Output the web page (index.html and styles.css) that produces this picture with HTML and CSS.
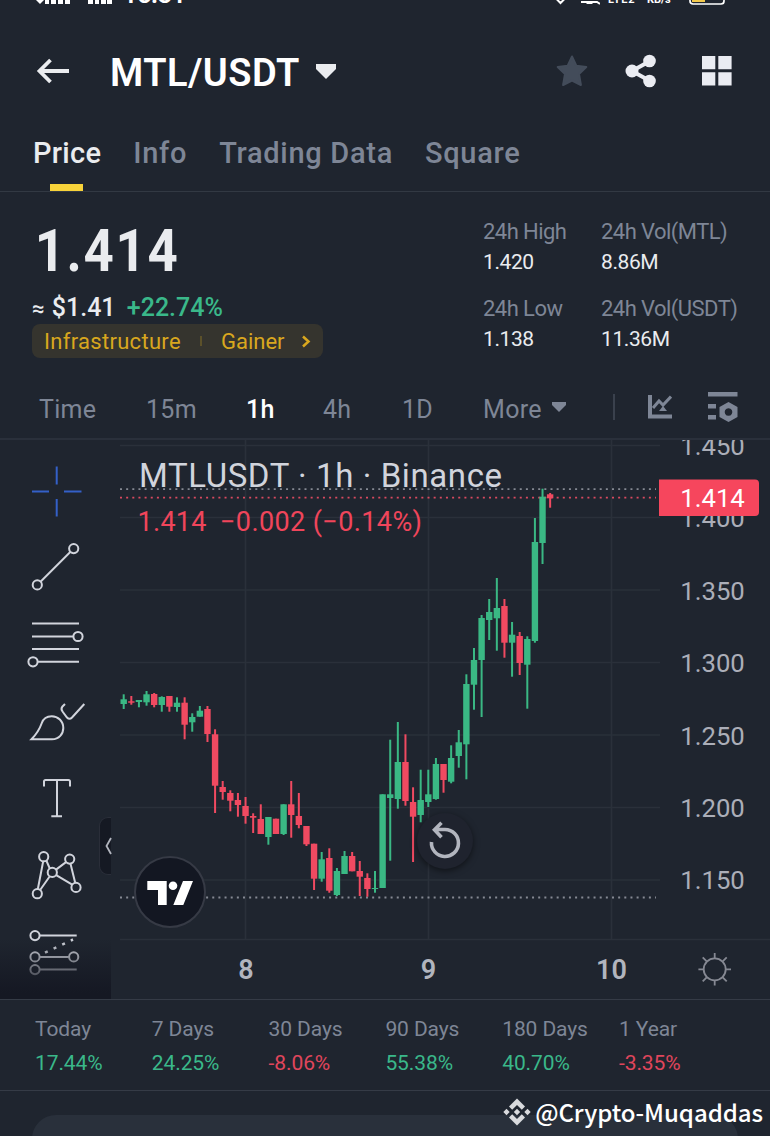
FILE: index.html
```html
<!DOCTYPE html>
<html lang="en">
<head>
<meta charset="utf-8">
<meta name="viewport" content="width=device-width, initial-scale=1">
<title>MTL/USDT</title>
<link rel="stylesheet" href="styles.css">
</head>
<body>
    <div class="status-bar">
      <svg width="76" height="6" viewBox="36 0 76 6" fill="#fff">
        <path d="M36 0h8l-4 4zM45 0h4v4h-4zM51 0h5v4h-5zM58 0h5v4h-5zM65 0h5v4h-5zM88 0h5v4h-5zM95 0h4v4h-4zM101 0h5v4h-5zM107 0h5v4h-5z"/>
      </svg>
      <span class="clock">16:51</span>
      <svg class="alerts" width="44" height="6" viewBox="556 0 44 6" fill="none" stroke="#fff" stroke-width="2">
        <path d="M556.5-1l4 4 4-4M581 2h16l3 2M586.500 3h6"/>
      </svg>
      <span class="net">LTE2</span>
      <span class="net speed">KB/s</span>
      <svg class="battery" width="37" height="6" viewBox="689 0 37 6">
        <path d="M692 0h13v2h-13z" fill="#f2c94c"/>
        <path d="M690-4v5q0 3 3 3h28q3 0 3-3v-5" fill="none" stroke="#fff" stroke-width="1.700"/>
      </svg>
    </div>

    <div class="header">
      <svg class="back" width="34" height="28" viewBox="0 0 34 28">
        <path d="M33 14H3M14.500 3L3.500 14l11 11" fill="none" stroke="#eaecef" stroke-width="3.800"/>
      </svg>
      <h1>MTL/USDT</h1>
      <svg class="caret" width="20" height="16" viewBox="0 0 20 16"><path d="M0 0h20v5L10 15 0 5z" fill="#eaecef"/></svg>
      <div class="actions">
        <svg width="32" height="34" viewBox="0 0 32 34">
          <path d="M16 2.500l4.300 9.200 10 1.300-7.300 7 1.900 11L16 26.500 7.100 31 9 20 1.700 13l10-1.300z" fill="#434c5a" stroke="#434c5a" stroke-width="2" stroke-linejoin="round"/>
        </svg>
        <svg width="32" height="34" viewBox="0 0 32 34" fill="#eaecf2">
          <path d="M25 7L7 17l18 10" fill="none" stroke="#eaecf2" stroke-width="4"/>
          <circle cx="24.500" cy="7" r="6.300"/><circle cx="7" cy="17" r="6.500"/><circle cx="24.500" cy="27" r="6.300"/>
        </svg>
        <svg width="30" height="30" viewBox="0 0 30 30">
          <path d="M0 0h13.300v13.300H0zM16.300 0h13.300v13.300H16.300zM0 16.300h13.300v13.300H0zM16.300 16.300h13.300v13.300H16.300z" fill="#eaecf2"/>
        </svg>
      </div>
    </div>

    <div class="tabs">
      <a class="active">Price</a>
      <a>Info</a>
      <a>Trading Data</a>
      <a>Square</a>
    </div>

    <div class="summary">
      <div class="price-box">
        <div class="price">1.414</div>
        <div class="change"><span class="approx">≈</span> <span class="usd">$1.41</span> <span class="up">+22.74%</span></div>
        <div class="tags">
          <span class="tag">Infrastructure</span>
          <i></i>
          <span>Gainer</span>
          <svg width="9" height="13" viewBox="0 0 9 13"><path d="M1 1.500l5.500 5-5.500 5" fill="none" stroke="#d9a71e" stroke-width="2.500"/></svg>
        </div>
      </div>
      <div class="day-stats">
        <div><label>24h High</label><b>1.420</b></div>
        <div><label>24h Vol(MTL)</label><b>8.86M</b></div>
        <div><label>24h Low</label><b>1.138</b></div>
        <div><label>24h Vol(USDT)</label><b>11.36M</b></div>
      </div>
    </div>

    <div class="intervals">
      <span>Time</span>
      <span>15m</span>
      <span class="active">1h</span>
      <span>4h</span>
      <span>1D</span>
      <span class="more">More <svg width="14" height="10" viewBox="0 0 14 10"><path d="M0 0h14v3L7 10 0 3z" fill="#7e8696"/></svg></span>
      <i></i>
      <svg width="24" height="24" viewBox="0 0 24 24" fill="none" stroke="#7e8696">
        <path d="M2 0v21.500h22" stroke-width="4"/>
        <path d="M5 13l6-7 4 4 8-8.500" stroke-width="3"/>
        <path d="M15 11l4 5h-8z" fill="#7e8696" stroke="none"/>
      </svg>
      <svg width="30" height="30" viewBox="0 0 30 30" fill="#7e8696">
        <path d="M0 0h29.500v4.500H0zM0 12h8v4.500H0zM0 23h8v4.500H0z"/>
        <path d="M20.500 10l9 5v10l-9 5-9-5V15zM20.500 16.200a3.800 3.800 0 1 0 .01 0z" fill-rule="evenodd"/>
      </svg>
    </div>

    <div class="chart-area">
      <div class="toolbar">
        <svg class="cross" viewBox="0 0 64 76.800"><path d="M32.700 13.400v18M32.700 46v17.400M8 38.400h17M40 38.400h17.500"/></svg>
        <svg viewBox="0 0 64 76.800"><path d="M16.500 52.700l30-30"/><circle cx="49.700" cy="19.600" r="4.600"/><circle cx="13.300" cy="55.900" r="4.600"/></svg>
        <svg viewBox="0 0 64 76.800"><path d="M8 17.500h47M8 30.500h41.500M8 43.100h47M13.500 55.800H55"/><circle cx="54" cy="30.500" r="4.600"/><circle cx="9" cy="55.800" r="4.600"/></svg>
        <svg viewBox="0 0 64 76.800"><path d="M7.500 56.300H28c7 0 11.300-5.300 11.300-11.300 0-7-5.300-11.700-11.600-11.700-5.700 0-8.700 3.200-10 7-2.200 6.200-5 10.700-10.200 16zM41 21l-2.500 2.500q-2 2.500 0 5l4.500 6q2.500 2.500 5 0L60.300 21"/></svg>
        <svg viewBox="0 0 64 76.800"><path d="M20 26.500v-5q0-1.600 1.600-1.600h22.800q1.600 0 1.600 1.600v5M33 19.900v36.300M27.300 56.200H38"/></svg>
        <svg viewBox="0 0 64 76.800"><path d="M19.200 24.200l-5.400 28M22.300 23.500l3.500 8M32 32.600l10-7.500M25.800 39.300l-9.500 13.500M32.200 38.100l16 9.600M46.500 26.700l4.700 19"/><circle cx="19.700" cy="19.700" r="4.600"/><circle cx="45.700" cy="22.100" r="4.600"/><circle cx="28.300" cy="35.400" r="4.600"/><circle cx="13.300" cy="56.700" r="4.600"/><circle cx="52" cy="50.400" r="4.600"/></svg>
        <svg viewBox="0 0 64 76.800"><path d="M15.700 22.600h37M15.700 43.900H45M15.700 56.600h37"/><path d="M21 39.600l28-13.100" stroke-dasharray="3 6.500" stroke-width="2.500"/><circle cx="11" cy="22.600" r="4.600"/><circle cx="11" cy="43.900" r="4.600"/><circle cx="49.700" cy="43.900" r="4.600"/><circle cx="11" cy="56.600" r="4.600"/></svg>
        <div class="fade"></div>
        <div class="collapse"><svg width="7" height="18" viewBox="0 0 7 18"><path d="M6 1L1.500 9 6 17" fill="none" stroke="#b2b5be" stroke-width="1.800"/></svg></div>
      </div>

      <svg class="chart" width="658" height="559" viewBox="112 0 658 559">
        <g class="grid">
          <path d="M120 5.500h540M120 77.500h540M120 150h540M120 222.500h540M120 295h540M120 367.500h540M120 440h540M120 499.500h650"/>
          <path d="M245.500 0v499M428.500 0v499M611.500 0v499"/>
        </g>
        <g class="scale">
          <text x="712.500" y="15">1.450</text>
          <text x="712.500" y="87">1.400</text>
          <text x="712.500" y="159.500">1.350</text>
          <text x="712.500" y="232">1.300</text>
          <text x="712.500" y="304.500">1.250</text>
          <text x="712.500" y="376.500">1.200</text>
          <text x="712.500" y="449">1.150</text>
        </g>
        <g class="dates">
          <text x="246" y="538.500">8</text>
          <text x="428.500" y="538.500">9</text>
          <text x="611.500" y="538.500">10</text>
        </g>
        <path class="dots" d="M120 49.200h536M120 457.500h536"/>
        <path class="dots last" d="M120 57.600h536"/>
        <g id="candles"></g>
        <text class="symbol" x="139" y="46.500" textLength="363">MTLUSDT · 1h · Binance</text>
        <text class="quote" x="137.500" y="90.500" textLength="69">1.414</text>
        <text class="quote" x="220" y="90.500" textLength="202">−0.002 (−0.14%)</text>
        <path d="M659 39.500h96q4 0 4 4v28.500q0 4-4 4h-96z" fill="#f6465d"/>
        <text class="last-price" x="712.500" y="67">1.414</text>

        <!-- TradingView badge -->
        <circle cx="170" cy="452" r="35" fill="#131722" stroke="#363a45" stroke-width="2"/>
        <path d="M147.300 441h19.400v24H158v-15h-10.700zM183 441h10l-9.700 24h-10z" fill="#fff"/>
        <circle cx="173" cy="445.700" r="4.300" fill="#fff"/>

        <!-- reset button -->
        <circle class="reset" cx="445" cy="401" r="28"/>
        <path d="M431.500 402a13.500 13.500 0 1 0 13.500-12.500h-9M441.500 382.700l-7 7 7 7.500" fill="none" stroke="#b2b5be" stroke-width="3.600"/>

        <g fill="none" stroke="#868993" stroke-width="1.800">
          <circle cx="714.700" cy="529.300" r="11"/>
          <path d="M714.700 518v-5M714.700 540.600v5M703.400 529.300h-5M726 529.300h5M706.700 521.300l-4-4M722.700 537.300l4 4M706.700 537.300l-4 4M722.700 521.300l4-4"/>
        </g>
      </svg>
    </div>

    <div class="periods">
      <div><label>Today</label><span class="up">17.44%</span></div>
      <div><label>7 Days</label><span class="up">24.25%</span></div>
      <div><label>30 Days</label><span class="down">-8.06%</span></div>
      <div><label>90 Days</label><span class="up">55.38%</span></div>
      <div><label>180 Days</label><span class="up">40.70%</span></div>
      <div><label>1 Year</label><span class="down">-3.35%</span></div>
    </div>

    <div class="panel"></div>

    <div class="watermark">
      <svg width="28" height="28" viewBox="0 0 28 28" fill="#d9dadd">
        <path d="M14 .5l8 8-3.200 3.200L14 6.900l-4.800 4.800L6 8.500zM14 27.500l8-8-3.200-3.200-4.800 4.800-4.800-4.800L6 19.500zM3.500 10.800L6.700 14l-3.200 3.200L.3 14zM24.500 10.800l3.200 3.200-3.200 3.200-3.200-3.200zM14 10.800l3.200 3.200-3.200 3.200-3.200-3.200z"/>
      </svg>
      <span>@Crypto-Muqaddas</span>
    </div>
    <script src="chart.js"></script>
</body>
</html>
```
FILE: styles.css
```css
body {
  margin: 0;
  width: 770px;
  height: 1136px;
  overflow: hidden;
  position: relative;
  background: #1f252f;
  color: #eaecef;
  font-family: Roboto, "Liberation Sans", sans-serif;
}

* {
  box-sizing: border-box;
}

svg {
  display: block;
  flex: none;
}

.up {
  color: #3ab88a;
}

.down {
  color: #e0465c;
}

/* Status bar, mostly scrolled off the top */
.status-bar {
  display: flex;
  align-items: flex-start;
  height: 14px;
  padding-left: 36px;
  overflow: hidden;
  color: #fff;
  white-space: nowrap;
}

.clock {
  width: 60px;
  margin: -23px 0 0 10px;
  font-size: 28px;
  font-weight: 500;
  line-height: 34px;
  letter-spacing: -1.6px;
}

.alerts {
  margin-left: 374px;
}

.net {
  width: 28px;
  margin: -8px 0 0 8px;
  font-size: 11px;
  font-weight: 700;
  line-height: 15px;
  letter-spacing: 0.8px;
}

.speed {
  margin-left: 11px;
  letter-spacing: 0;
}

.battery {
  margin-left: 14px;
}

/* Header */
.header {
  display: flex;
  align-items: center;
  height: 114px;
  padding: 0 38px 0 36px;
}

.header h1 {
  width: 190px;
  margin: 4px 16px 0 40px;
  font-size: 38px;
  font-weight: 600;
  letter-spacing: 0.45px;
  white-space: nowrap;
  color: #fff;
}

.header .caret {
  margin-top: 2px;
}

.actions {
  display: flex;
  align-items: center;
  margin-left: auto;
  gap: 44px;
}

.actions svg:nth-child(2) {
  margin-right: 1px;
  margin-left: -7px;
}

/* Tabs */
.tabs {
  display: flex;
  gap: 32px;
  height: 64px;
  padding-left: 33px;
  border-bottom: 1px solid #323943;
  font-size: 29px;
  font-weight: 500;
  line-height: 50px;
  letter-spacing: 0.7px;
  color: #7e8696;
}

.tabs a {
  position: relative;
  white-space: nowrap;
}

.tabs .active {
  color: #eaecef;
  letter-spacing: 0.3px;
}

.tabs .active::after {
  content: "";
  position: absolute;
  left: 17px;
  bottom: 0;
  width: 33px;
  height: 7px;
  background: #f8d33a;
}

/* Price and 24h stats */
.summary {
  display: flex;
  height: 184px;
  padding-left: 32px;
}

.price-box {
  width: 451px;
}

.price {
  height: 97px;
  padding: 24px 0 0 3px;
  font-size: 60px;
  font-weight: 700;
  line-height: 70px;
  letter-spacing: 1.9px;
  transform: scaleX(0.88);
  transform-origin: left;
}

.change {
  height: 35px;
  font-size: 25px;
  font-weight: 500;
  line-height: 38px;
  white-space: nowrap;
}

.change .approx {
  margin-right: 1px;
  font-size: 22px;
}

.change .up {
  margin-left: 5px;
}

.tags {
  display: flex;
  align-items: center;
  width: 291px;
  height: 34px;
  padding-left: 12px;
  border-radius: 8px;
  background: #35342e;
  color: #d9a71e;
  font-size: 22px;
}

.tags .tag {
  width: 156px;
  letter-spacing: 0.3px;
}

.tags i {
  width: 2px;
  height: 10px;
  margin-right: 19px;
  background: #5c512a;
}

.tags svg {
  margin-left: auto;
  margin-right: 12px;
}

.day-stats {
  display: grid;
  grid-template-columns: 118px 160px;
  grid-template-rows: 77px 77px;
  padding-top: 25px;
}

.day-stats label,
.day-stats b {
  display: block;
  font-size: 22px;
  font-weight: 400;
  line-height: 30px;
  letter-spacing: -0.55px;
  color: #7e8696;
  white-space: nowrap;
}

.day-stats b {
  font-size: 21px;
  letter-spacing: -0.4px;
  color: #eaecef;
}

/* Interval row */
.intervals {
  display: grid;
  grid-template-columns: 107px 100px 77px 79px 81px 129px 34px 60px 30px;
  align-items: center;
  height: 64px;
  padding: 4px 0 0 39px;
  border-bottom: 2px solid #2a303b;
  font-size: 25px;
  letter-spacing: 0.3px;
  color: #7e8696;
}

.intervals .active {
  color: #fff;
  font-weight: 500;
}

.intervals .more {
  display: flex;
  align-items: center;
  gap: 10px;
}

.intervals .more svg {
  margin-top: -4px;
}

.intervals i {
  width: 2px;
  height: 26px;
  margin: -4px 0 0 1px;
  background: #3a414d;
}

.intervals > svg {
  margin: -4px 0 0 2px;
}

/* Chart */
.chart-area {
  display: grid;
  grid-template-columns: 112px 658px;
  height: 560px;
  border-bottom: 1px solid #353b46;
}

.toolbar {
  position: relative;
  width: 111px;
  height: 559px;
  padding: 12.6px 0 0 24px;
}

.toolbar > svg {
  width: 64px;
  height: 76.8px;
  fill: none;
  stroke: #d1d4dc;
  stroke-width: 2;
}

.toolbar .cross {
  stroke: #3460c8;
}

.fade {
  position: absolute;
  left: 0;
  bottom: 0;
  width: 111px;
  height: 60px;
  background: linear-gradient(rgba(21, 24, 35, 0), #151823 90%);
}

.collapse {
  position: absolute;
  right: 0;
  top: 377px;
  width: 12px;
  height: 58px;
  padding: 19px 0 0 5px;
  border: 1px solid #2a2e39;
  border-right: none;
  border-radius: 9px 0 0 9px;
  background: #151923;
}

.chart {
  font-family: Roboto, sans-serif;
}

.grid {
  fill: none;
  stroke: #2a303a;
  stroke-width: 1.7;
}

.scale {
  font-size: 25.7px;
  text-anchor: middle;
  fill: #abaeb8;
}

.dates {
  font-size: 27px;
  font-weight: 600;
  text-anchor: middle;
  fill: #b2b5be;
}

.dots {
  fill: none;
  stroke: #858993;
  stroke-width: 1.8;
  stroke-dasharray: 2 4.15;
}

.dots.last {
  stroke: #d94a60;
}

.symbol {
  font-size: 33px;
  fill: #d1d4dc;
}

.quote {
  font-size: 27px;
  fill: #f0455b;
}

.last-price {
  font-size: 25.7px;
  text-anchor: middle;
  fill: #fff;
}

.reset {
  fill: #1f232e;
  filter: drop-shadow(0 2px 3px rgba(0, 0, 0, 0.5));
}

.candle-up {
  fill: #3ab884;
}

.candle-down {
  fill: #f04a61;
}

/* Performance per period */
.periods {
  display: grid;
  grid-template-columns: repeat(6, 116.8px);
  height: 91px;
  padding: 12px 0 0 35px;
  border-bottom: 1px solid #353b46;
}

.periods label,
.periods span {
  display: block;
  font-size: 21px;
  line-height: 34px;
  letter-spacing: -0.1px;
  white-space: nowrap;
}

.periods label {
  color: #7e8696;
}

.panel {
  height: 60px;
  margin: 24px 32px 0;
  border-radius: 24px;
  background: #29303b;
}

.watermark {
  position: absolute;
  right: 7px;
  bottom: 6px;
  display: flex;
  align-items: center;
  gap: 4px;
  font-family: "Noto Sans CJK SC", sans-serif;
  font-size: 24px;
  font-weight: 500;
  line-height: 36px;
  letter-spacing: -0.05px;
  color: #fff;
}
```
FILE: chart.js
```js
// one row per hour: high, low, body top, body bottom, 1 = up / 0 = down
var candles = [
  [254.3, 269, 259.3, 264, 1],
  [256, 264.7, 261.3, 262.7, 0],
  [260, 267.3, 260, 262, 1],
  [251, 265.7, 254.3, 262.3, 1],
  [253, 267.3, 254, 265, 0],
  [256.3, 271.7, 257, 265, 1],
  [256, 271.7, 256, 266.7, 0],
  [257.3, 271.7, 262.7, 267, 1],
  [257.3, 299.3, 262.7, 284.7, 0],
  [273.3, 291.7, 277, 282.3, 1],
  [266, 276.7, 270.7, 276.7, 1],
  [266, 302, 269, 294, 0],
  [289.3, 373, 294.3, 345.7, 0],
  [341, 359.7, 347, 352, 0],
  [350.3, 371.3, 353, 360.7, 0],
  [353, 376.7, 360, 365, 0],
  [357, 383.7, 366, 376, 0],
  [373.3, 393, 376, 377.7, 0],
  [364.3, 394, 379, 394, 0],
  [377, 404.7, 377, 397, 1],
  [378.7, 394, 378.7, 394, 0],
  [364.3, 395, 364.3, 394, 1],
  [341, 397.7, 364.3, 375, 0],
  [353, 388.3, 376, 385, 0],
  [386, 406, 386, 404.3, 0],
  [403.7, 450, 403.7, 438.7, 0],
  [412, 441.7, 419.3, 438.7, 1],
  [408.3, 452.7, 418, 450.7, 0],
  [428, 456, 431, 455, 1],
  [411, 434, 416, 434, 1],
  [412, 431.3, 416, 431.3, 0],
  [421, 456, 431, 436.7, 0],
  [433.3, 456.7, 438, 449, 0],
  [431, 452.7, 448, 449, 1],
  [354.3, 448, 354.3, 448, 1],
  [299.7, 420.7, 354.3, 358, 1],
  [282, 368.7, 322, 359, 1],
  [294.3, 365.7, 322, 361, 0],
  [347.3, 422, 362, 376.7, 0],
  [329.7, 382.3, 360, 375, 1],
  [329.7, 367, 354.3, 362, 1],
  [318, 359.7, 324, 359, 1],
  [324, 352.7, 324, 340, 0],
  [305.3, 343.3, 318, 341.7, 1],
  [290, 327.7, 302.3, 316, 1],
  [234.3, 339.3, 244, 304.3, 1],
  [208, 269.7, 220, 244.7, 1],
  [175, 277, 178, 220, 1],
  [159, 200, 172, 180, 1],
  [138, 210.7, 168, 178.3, 1],
  [159, 217.7, 166, 202.7, 0],
  [182, 236.7, 194.7, 202.7, 1],
  [192, 235, 196, 223, 0],
  [196.3, 268.7, 199, 224.7, 1],
  [78, 202.7, 102, 201, 1],
  [48.7, 124, 56.7, 103, 1],
  [53, 67.7, 54.3, 58.3, 0]
];

var group = document.getElementById("candles");

function addRect(x, y, w, h, up) {
  var rect = document.createElementNS("http://www.w3.org/2000/svg", "rect");
  rect.setAttribute("x", x);
  rect.setAttribute("y", y);
  rect.setAttribute("width", w);
  rect.setAttribute("height", h);
  rect.setAttribute("class", up ? "candle-up" : "candle-down");
  group.appendChild(rect);
}

for (var i = 0; i < candles.length; i++) {
  var c = candles[i];
  var x = 123.7 + i * 7.615;
  addRect(x - 1, c[0], 2, c[1] - c[0], c[4]);
  addRect(x - 3.2, c[2], 6.4, c[3] - c[2], c[4]);
}
```
